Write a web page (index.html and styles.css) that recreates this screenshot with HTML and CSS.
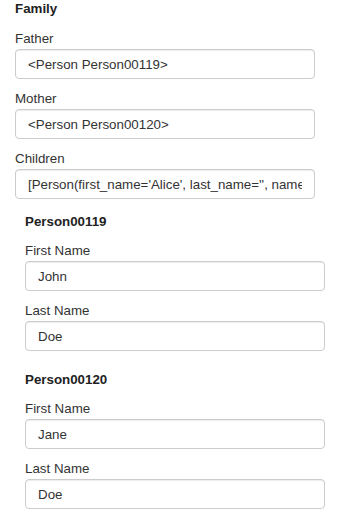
FILE: index.html
```html
<!DOCTYPE html>
<html>
<head>
<meta charset="utf-8">
<link rel="stylesheet" href="styles.css">
</head>
<body>
<div class="form">
  <div class="title title-main">Family</div>
  <div class="group">
    <label class="label">Father</label>
    <input class="field" type="text" value="<Person Person00119>" readonly>
  </div>
  <div class="group">
    <label class="label">Mother</label>
    <input class="field" type="text" value="<Person Person00120>" readonly>
  </div>
  <div class="group">
    <label class="label">Children</label>
    <input class="field" type="text" value="[Person(first_name='Alice', last_name='', name='Person00121')]" readonly>
  </div>
  <div class="person">
    <div class="title">Person00119</div>
    <div class="group">
      <label class="label">First Name</label>
      <input class="field" type="text" value="John" readonly>
    </div>
    <div class="group">
      <label class="label">Last Name</label>
      <input class="field" type="text" value="Doe" readonly>
    </div>
  </div>
  <div class="person">
    <div class="title">Person00120</div>
    <div class="group">
      <label class="label">First Name</label>
      <input class="field" type="text" value="Jane" readonly>
    </div>
    <div class="group">
      <label class="label">Last Name</label>
      <input class="field" type="text" value="Doe" readonly>
    </div>
  </div>
</div>
</body>
</html>
```
FILE: styles.css
```css
html, body {
  margin: 0;
  padding: 0;
  background: #ffffff;
}
body {
  font-family: "Liberation Sans", Arial, Helvetica, sans-serif;
  font-size: 13.33px;
  line-height: 18px;
  color: #333333;
}
.form {
  padding: 0 15px;
  width: 300px;
}
.title {
  font-weight: bold;
  line-height: 18px;
  margin-bottom: 11px;
  color: #222222;
}
.title-main {
  margin-bottom: 12px;
}
.group {
  margin-bottom: 11px;
}
.label {
  display: block;
  line-height: 18px;
  margin-bottom: 1px;
}
.field {
  display: block;
  box-sizing: border-box;
  width: 300px;
  height: 30px;
  margin: 0;
  padding: 6px 12px;
  font-family: inherit;
  font-size: 13.33px;
  line-height: 16px;
  color: #333333;
  background: #ffffff;
  border: 1px solid #cccccc;
  border-radius: 4px;
  box-shadow: inset 0 1px 1px rgba(0, 0, 0, 0.075);
  outline: none;
}
.person {
  margin-left: 10px;
  padding-top: 3px;
}
.person + .person {
  padding-top: 9px;
}
```
